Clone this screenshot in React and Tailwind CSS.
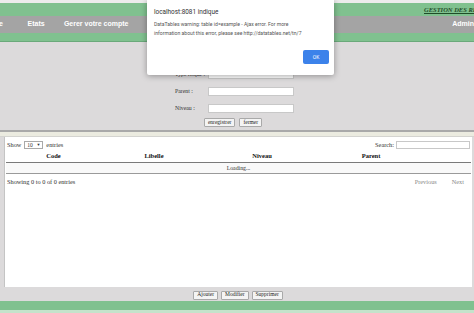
import React from "react";

const serif = { fontFamily: '"Liberation Serif", "Times New Roman", serif' };

const Btn = ({ children }) => (
  <button className="h-[9px] px-[3px] bg-[#f4f4f4] border border-[#a9a9a9] rounded-[1px] text-[5.5px] leading-none text-[#222]">
    {children}
  </button>
);

const Field = ({ label }) => (
  <div className="flex items-center h-[17px]">
    <span className="w-[33px] text-[5.8px] text-[#333]">{label}</span>
    <div className="w-[86px] h-[9px] bg-white border border-[#c8c8c8]" />
  </div>
);

const App = () => {
  return (
    <main
      className="relative w-[474px] h-[313px] overflow-hidden bg-[#dcdadb] flex flex-col"
      style={serif}
    >
      {/*//SECTION: header */}
      <div className="h-[3px] bg-[#ececec]" />
      <div className="h-[13px] bg-[#80c18f] flex items-center overflow-hidden">
        <span className="ml-[424px] whitespace-nowrap text-[6.5px] italic font-bold underline text-[#1f4d28]">
          GESTION DES RISQUES
        </span>
      </div>
      <nav className="h-[17px] bg-[#a4a4a4] flex items-center text-white text-[7px] font-bold whitespace-nowrap font-['Liberation_Sans',Arial,sans-serif]">
        <span className="ml-[-1px] w-[29px]">e</span>
        <span className="w-[37px]">Etats</span>
        <span className="w-[395px]">Gerer votre compte</span>
        <span>Admin</span>
      </nav>
      <div className="h-[9px] bg-[#80c18f] border-b border-[#6aa97a]" />

      {/*//SECTION: form */}
      <section className="h-[88px] flex flex-col items-center pt-[24px] pr-[5px]">
        <Field label="Type risque :" />
        <Field label="Parent :" />
        <Field label="Niveau :" />
        <div className="flex gap-[4px] mt-[1px] ml-[-3px]">
          <Btn>enregistrer</Btn>
          <Btn>fermer</Btn>
        </div>
      </section>
      <div className="h-[2px] bg-[#a9a9a9]" />
      <div className="h-[5px] bg-[#ebebe0] border-b border-[#d4d4d0]" />

      {/*//SECTION: table */}
      <section className="ml-[4px] mr-[2px] h-[150px] bg-white border-l border-[#c4c4c4] px-[1px] pt-[3px] text-[6.3px] text-[#333]">
        <div className="flex items-center h-[10px] px-[1px]">
          <span>Show</span>
          <span className="mx-[3px] w-[19px] h-[8px] border border-[#a9a9a9] flex items-center justify-between px-[2px] text-[5.5px]">
            10 <span className="text-[4px]">▼</span>
          </span>
          <span>entries</span>
          <span className="ml-auto mr-[2px]">Search:</span>
          <div className="w-[74px] h-[8px] border border-[#c8c8c8]" />
        </div>
        <div className="grid grid-cols-[95px_106px_110px_108px_1fr] h-[13px] items-center font-bold text-[6.5px] text-[#111] border-b-[1.5px] border-[#7a7a7a] text-center">
          <span>Code</span>
          <span>Libelle</span>
          <span>Niveau</span>
          <span>Parent</span>
          <span />
        </div>
        <div className="h-[11px] flex items-center justify-center bg-[#f9f9f9] border-b-[1.5px] border-[#9a9a9a] text-[5.8px]">
          Loading...
        </div>
        <div className="flex items-center h-[15px] pt-[1px] px-[1px]">
          <span>Showing 0 to 0 of 0 entries</span>
          <span className="ml-auto text-[#888]">Previous</span>
          <span className="ml-[15px] mr-[6px] text-[#888]">Next</span>
        </div>
      </section>

      {/*//SECTION: footer */}
      <div className="h-[14px] flex items-center justify-center gap-[3px] pt-[2px] pl-[2px]">
        <Btn>Ajouter</Btn>
        <Btn>Modifier</Btn>
        <Btn>Supprimer</Btn>
      </div>
      <div className="h-[9px] bg-[#80c18f]" />
      <div className="flex-1 bg-[#c4e3cb]" />

      {/*//SECTION: alert dialog */}
      <div className="absolute left-[147px] top-0 w-[187px] h-[75px] bg-white rounded-b-[2px] shadow-[0_1px_6px_rgba(0,0,0,0.35)] px-[7px] pt-[9px] font-['Roboto',Arial,sans-serif] text-[#333]">
        <p className="text-[6.4px] leading-none">localhost:8081 indique</p>
        <p className="mt-[5px] text-[5.1px] leading-[8.5px] text-[#555]">
          DataTables warning: table id=example - Ajax error. For more
          <br />
          information about this error, please see http://datatables.net/tn/7
        </p>
        <div className="flex justify-end mt-[13px] mr-[-2px]">
          <button className="w-[26px] h-[14px] bg-[#3c82ea] rounded-[2px] text-white text-[5px] leading-none">
            OK
          </button>
        </div>
      </div>
    </main>
  );
};

export default App;
